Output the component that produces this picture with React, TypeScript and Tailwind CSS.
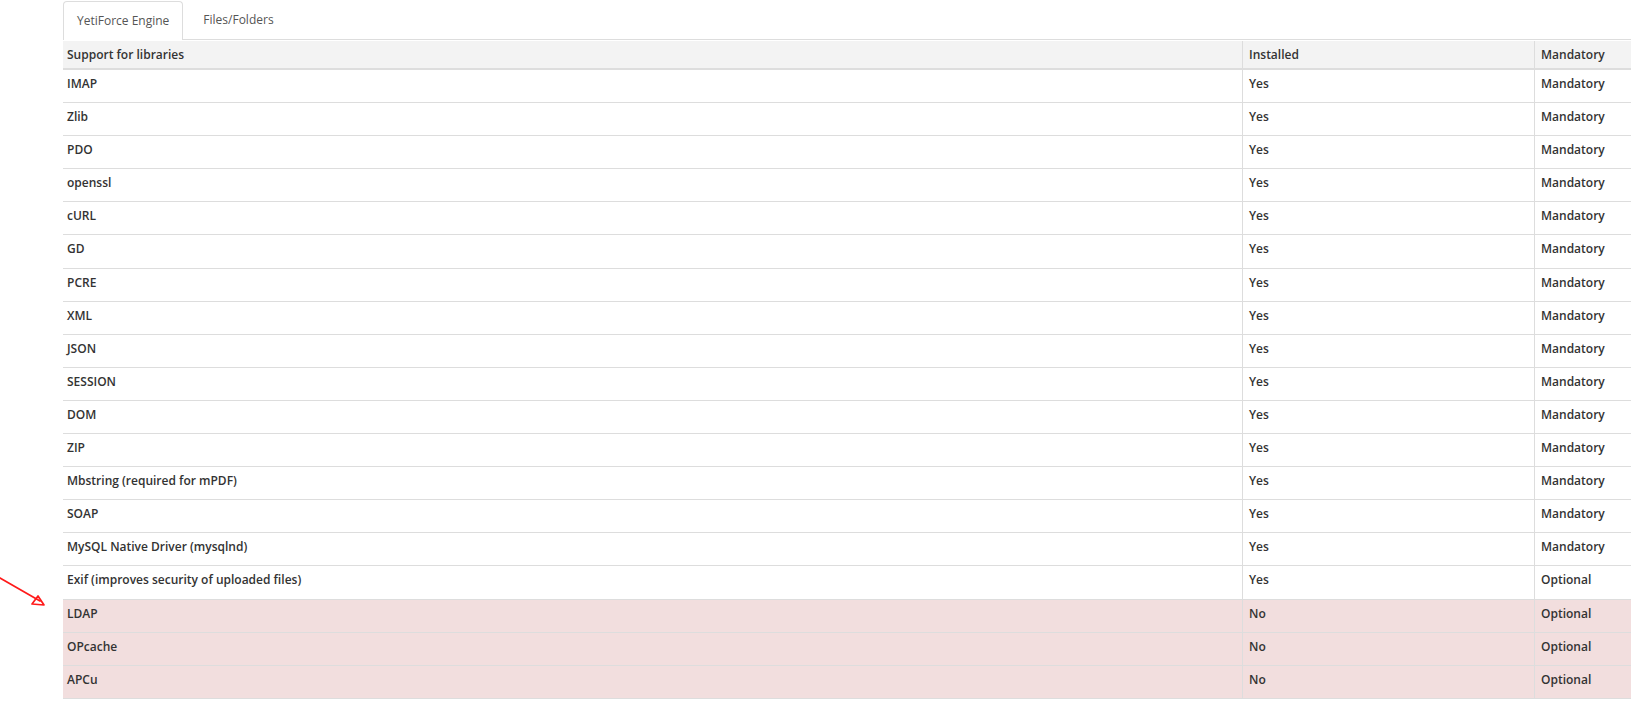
const libraries: { name: string; installed: string; mandatory: string }[] = [
  { name: "IMAP", installed: "Yes", mandatory: "Mandatory" },
  { name: "Zlib", installed: "Yes", mandatory: "Mandatory" },
  { name: "PDO", installed: "Yes", mandatory: "Mandatory" },
  { name: "openssl", installed: "Yes", mandatory: "Mandatory" },
  { name: "cURL", installed: "Yes", mandatory: "Mandatory" },
  { name: "GD", installed: "Yes", mandatory: "Mandatory" },
  { name: "PCRE", installed: "Yes", mandatory: "Mandatory" },
  { name: "XML", installed: "Yes", mandatory: "Mandatory" },
  { name: "JSON", installed: "Yes", mandatory: "Mandatory" },
  { name: "SESSION", installed: "Yes", mandatory: "Mandatory" },
  { name: "DOM", installed: "Yes", mandatory: "Mandatory" },
  { name: "ZIP", installed: "Yes", mandatory: "Mandatory" },
  { name: "Mbstring (required for mPDF)", installed: "Yes", mandatory: "Mandatory" },
  { name: "SOAP", installed: "Yes", mandatory: "Mandatory" },
  { name: "MySQL Native Driver (mysqlnd)", installed: "Yes", mandatory: "Mandatory" },
  { name: "Exif (improves security of uploaded files)", installed: "Yes", mandatory: "Optional" },
  { name: "LDAP", installed: "No", mandatory: "Optional" },
  { name: "OPcache", installed: "No", mandatory: "Optional" },
  { name: "APCu", installed: "No", mandatory: "Optional" },
]

export default function App() {
  return (
    <div className="relative min-h-[703px] bg-white font-['Open_Sans',sans-serif] text-[12px] text-[#333]">
      {/* red annotation arrow */}
      <svg className="absolute left-0 top-[570px]" width="50" height="40" viewBox="0 0 50 40" fill="none">
        <path d="M0 8 L40 31" stroke="#ff1a1a" strokeWidth="1.7" strokeLinecap="round" />
        <path d="M38 26 L32 34 L44 35 Z" stroke="#ff1a1a" strokeWidth="1.7" strokeLinejoin="round" />
      </svg>

      <div className="pl-[63px]">
        {/* tabs */}
        <div className="flex h-[40px] items-end border-b border-[#ddd] pt-[1px]">
          <div className="-mb-px flex h-[39px] items-center rounded-t-[4px] border border-b-0 border-[#ddd] bg-white px-[13px] text-[#555]">
            YetiForce Engine
          </div>
          <div className="flex h-[38px] items-center pl-[20px] text-[#555]">Files/Folders</div>
        </div>

        {/* table */}
        <div className="font-semibold">
          <div className="grid h-[30px] grid-cols-[1179px_292px_1fr] border-t border-white border-b-2 border-b-[#ddd] bg-[#f3f3f3]">
            <div className="pl-[4px] pt-[5px]">Support for libraries</div>
            <div className="border-l border-[#ddd] pl-[6px] pt-[5px]">Installed</div>
            <div className="border-l border-[#ddd] pl-[6px] pt-[5px]">Mandatory</div>
          </div>
          {libraries.map((lib) => (
            <div
              key={lib.name}
              className={
                lib.installed === "No"
                  ? "grid h-[33.1px] grid-cols-[1179px_292px_1fr] border-b border-[#ddd] bg-[#f2dede]"
                  : "grid h-[33.1px] grid-cols-[1179px_292px_1fr] border-b border-[#ddd] bg-white"
              }
            >
              <div className="pl-[4px] pt-[5px]">{lib.name}</div>
              <div className="border-l border-[#ddd] pl-[6px] pt-[5px]">{lib.installed}</div>
              <div className="border-l border-[#ddd] pl-[6px] pt-[5px]">{lib.mandatory}</div>
            </div>
          ))}
        </div>
      </div>
    </div>
  )
}
